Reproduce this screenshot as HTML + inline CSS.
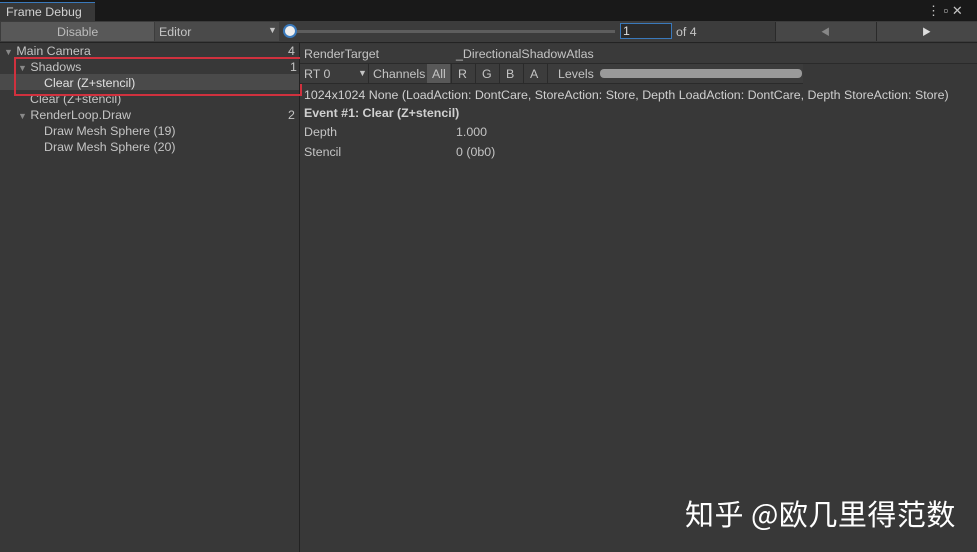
<!DOCTYPE html><html><head><meta charset="utf-8"><style>
body{margin:0;width:977px;height:552px;background:#383838;font-family:"Liberation Sans","Noto Sans CJK SC",sans-serif;font-size:12.4px;color:#c4c4c4;position:relative;overflow:hidden}
.a{position:absolute;white-space:nowrap}
</style></head><body>
<div class="a" style="left:0;top:0;width:977px;height:21px;background:#191919"></div>
<div class="a" style="left:0;top:2px;width:95px;height:19px;background:#383838;border-top:1px solid #3a79bb"></div>
<div class="a" style="left:6px;top:5px;color:#d2d2d2">Frame Debug</div>
<div class="a" style="left:927px;top:3px;color:#c4c4c4;font-size:13px">⋮ ▫ ✕</div>
<div class="a" style="left:0;top:21px;width:977px;height:21px;background:#3c3c3c;border-bottom:1px solid #232323"></div>
<div class="a" style="left:1px;top:22px;width:153px;height:19px;background:#585858"></div>
<div class="a" style="left:57px;top:25px;color:#bbb">Disable</div>
<div class="a" style="left:155px;top:22px;width:124px;height:19px;background:#4a4a4a"></div>
<div class="a" style="left:159px;top:25px;color:#c4c4c4">Editor</div>
<div class="a" style="left:268px;top:25px;font-size:9px">▼</div>
<div class="a" style="left:290px;top:30px;width:325px;height:3px;background:#5e5e5e"></div>
<div class="a" style="left:283px;top:24px;width:10px;height:10px;border-radius:50%;background:#eee;border:2px solid #3a79bb"></div>
<div class="a" style="left:620px;top:23px;width:48px;height:14px;background:#2a2a2a;border:1px solid #3a79bb;color:#ddd;padding-left:2px;line-height:14px">1</div>
<div class="a" style="left:676px;top:25px">of 4</div>
<div class="a" style="left:775px;top:22px;width:100px;height:19px;background:#474747;border-left:1px solid #2a2a2a"></div>
<div class="a" style="left:876px;top:22px;width:101px;height:19px;background:#474747;border-left:1px solid #2a2a2a"></div>
<div class="a" style="left:821px;top:25px;font-size:9px;color:#888">◀</div>
<div class="a" style="left:922px;top:25px;font-size:9px;color:#ddd">▶</div>
<div class="a" style="left:299px;top:42px;width:1px;height:510px;background:#222"></div>
<div class="a" style="left:0;top:74px;width:299px;height:16px;background:#4a4a4a"></div>
<div class="a" style="left:4px;top:44px"><span style="font-size:9px;color:#888">▼</span> Main Camera</div><div class="a" style="left:288px;top:44px">4</div>
<div class="a" style="left:18px;top:60px"><span style="font-size:9px;color:#888">▼</span> Shadows</div><div class="a" style="left:290px;top:60px">1</div>
<div class="a" style="left:44px;top:76px;color:#e0e0e0">Clear (Z+stencil)</div>
<div class="a" style="left:30px;top:92px">Clear (Z+stencil)</div>
<div class="a" style="left:18px;top:108px"><span style="font-size:9px;color:#888">▼</span> RenderLoop.Draw</div><div class="a" style="left:288px;top:108px">2</div>
<div class="a" style="left:44px;top:124px">Draw Mesh Sphere (19)</div>
<div class="a" style="left:44px;top:140px">Draw Mesh Sphere (20)</div>
<div class="a" style="left:14px;top:57px;width:284px;height:35px;border:2px solid #d0313e"></div>
<div class="a" style="left:300px;top:44px;width:677px;height:19px;background:#3a3a3a;border-bottom:1px solid #2a2a2a"></div>
<div class="a" style="left:304px;top:47px">RenderTarget</div>
<div class="a" style="left:456px;top:47px">_DirectionalShadowAtlas</div>
<div class="a" style="left:300px;top:64px;width:503px;height:19px;background:#3c3c3c;border-bottom:1px solid #2a2a2a"></div>
<div class="a" style="left:304px;top:67px">RT 0</div><div class="a" style="left:358px;top:68px;font-size:9px">▼</div>
<div class="a" style="left:368px;top:64px;width:1px;height:19px;background:#2a2a2a"></div>
<div class="a" style="left:373px;top:67px">Channels</div>
<div class="a" style="left:427px;top:64px;width:23px;height:19px;background:#585858"></div>
<div class="a" style="left:432px;top:67px">All</div>
<div class="a" style="left:458px;top:67px">R</div><div class="a" style="left:482px;top:67px">G</div><div class="a" style="left:506px;top:67px">B</div><div class="a" style="left:530px;top:67px">A</div>
<div class="a" style="left:451px;top:64px;width:1px;height:19px;background:#2a2a2a;box-shadow:24px 0 #2a2a2a,48px 0 #2a2a2a,72px 0 #2a2a2a,96px 0 #2a2a2a"></div>
<div class="a" style="left:558px;top:67px">Levels</div>
<div class="a" style="left:600px;top:69px;width:202px;height:9px;background:#9a9a9a;border-radius:4px"></div>
<div class="a" style="left:304px;top:88px;color:#d0d0d0">1024x1024 None (LoadAction: DontCare, StoreAction: Store, Depth LoadAction: DontCare, Depth StoreAction: Store)</div>
<div class="a" style="left:304px;top:106px;font-weight:bold;color:#d0d0d0">Event #1: Clear (Z+stencil)</div>
<div class="a" style="left:304px;top:125px">Depth</div><div class="a" style="left:456px;top:125px">1.000</div>
<div class="a" style="left:304px;top:145px">Stencil</div><div class="a" style="left:456px;top:145px">0 (0b0)</div>
<div class="a" style="left:685px;top:492px;font-size:29px;letter-spacing:0.5px;color:#fff;font-family:'Noto Sans CJK SC',sans-serif">知乎 @欧几里得范数</div>
</body></html>
